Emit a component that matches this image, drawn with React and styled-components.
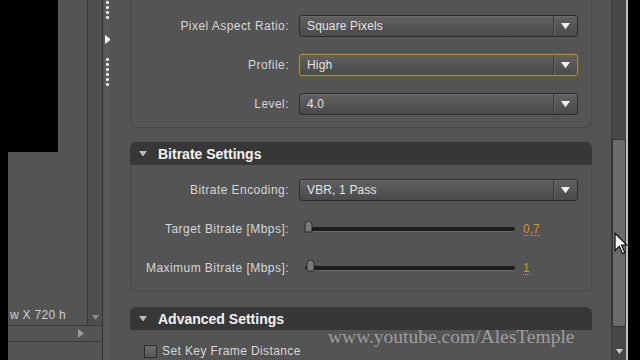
import React from 'react';
import styled, { createGlobalStyle } from 'styled-components';

const GlobalStyle = createGlobalStyle`
  html, body {
    margin: 0;
    padding: 0;
    background: #000;
    font-family: 'Liberation Sans', Arial, sans-serif;
  }
`;

const Screen = styled.div`
  position: relative;
  width: 640px;
  height: 360px;
  display: flex;
  background: #000;
  overflow: hidden;
`;

const LeftPane = styled.div`
  margin-left: 8px;
  width: 94px;
  display: flex;
  flex-direction: column;
  background: #545454;
`;

const Viewer = styled.div`
  flex: 1;
  display: flex;
  min-height: 0;
`;

const ViewerBody = styled.div`
  width: 79px;
  display: flex;
  flex-direction: column;
  border-right: 1px solid #3a3a3a;
`;

const Preview = styled.div`
  width: 50px;
  height: 152px;
  background: #000;
`;

const SizeText = styled.div`
  margin-top: auto;
  padding: 0 0 3px 2px;
  color: #cfcfcf;
  font-size: 12px;
  letter-spacing: 0.3px;
  white-space: nowrap;
`;

const VScroll = styled.div`
  width: 14px;
  display: flex;
  flex-direction: column;
  justify-content: flex-end;
  align-items: center;
  background: #4e4e4e;
  padding-bottom: 5px;
  box-sizing: border-box;
`;

const HScroll = styled.div`
  height: 17px;
  display: flex;
  align-items: center;
  border-top: 1px solid #3a3a3a;
  border-bottom: 1px solid #3a3a3a;
  box-sizing: border-box;
  padding-left: 70px;
`;

const BottomFill = styled.div`
  height: 18px;
`;

const Splitter = styled.div`
  width: 8px;
  display: flex;
  flex-direction: column;
  align-items: center;
  background: #585858;
  border-left: 1px solid #303030;
  box-sizing: border-box;
  padding: 1px 0 0 2px;
`;

const Dots = styled.div`
  display: flex;
  flex-direction: column;
  gap: 2px;
  margin-top: ${(p) => p.$top}px;
`;

const Dot = styled.span`
  width: 3px;
  height: 3px;
  background: #e8e8e8;
  border-radius: 1px;
`;

const MainPanel = styled.div`
  width: 502px;
  background: #545454;
  border-right: 1px solid #3c3c3c;
  box-sizing: border-box;
  padding: 0 19px 0 20px;
  display: flex;
  flex-direction: column;
`;

const Section = styled.div`
  border: 1px solid #4a4a4a;
  border-top: ${(p) => (p.$open ? 'none' : '1px solid #4a4a4a')};
  border-radius: 0 0 6px 6px;
  padding: ${(p) => p.$pad};
  display: flex;
  flex-direction: column;
  gap: 17px;
`;

const Row = styled.div`
  display: grid;
  grid-template-columns: 158px 279px;
  column-gap: 10px;
  align-items: center;
  height: 22px;
`;

const Label = styled.div`
  text-align: right;
  color: #d6d6d6;
  font-size: 12px;
  letter-spacing: 0.45px;
  white-space: nowrap;
`;

const Select = styled.div`
  height: 22px;
  box-sizing: border-box;
  display: flex;
  align-items: stretch;
  border-radius: 3px;
  border: 1px solid ${(p) => (p.$focus ? '#b88a30' : '#2c2c2c')};
  box-shadow: ${(p) => (p.$focus ? '0 0 0 1px #6e5a30' : 'inset 0 1px 0 #6a6a6a')};
  background: linear-gradient(#616161, #4a4a4a);
  color: #e4e4e4;
  font-size: 12px;
  letter-spacing: 0.15px;
`;

const SelectText = styled.div`
  flex: 1;
  display: flex;
  align-items: center;
  padding-left: 7px;
`;

const SelectArrow = styled.div`
  width: 23px;
  display: flex;
  align-items: center;
  justify-content: center;
  border-left: 1px solid #3c3c3c;
  box-shadow: inset 1px 0 0 #626262;
`;

const Header = styled.div`
  margin-top: ${(p) => p.$mt}px;
  height: 23px;
  display: flex;
  align-items: center;
  gap: 11px;
  padding-left: 9px;
  background: #373737;
  border-radius: 6px 6px 0 0;
  color: #f2f2f2;
  font-size: 14px;
  font-weight: bold;
`;

const SliderBox = styled.div`
  display: flex;
  align-items: center;
`;

const Track = styled.div`
  position: relative;
  margin-left: 6px;
  width: 210px;
  height: 4px;
  border-radius: 2px;
  background: #1c1c1c;
  box-shadow: 0 1px 0 #6a6a6a;
`;

const Knob = styled.svg`
  position: absolute;
  top: -7px;
  left: ${(p) => p.$x}px;
`;

const Value = styled.span`
  margin-left: 8px;
  color: #c9962e;
  font-size: 12px;
  border-bottom: 1px dotted #c9962e;
  line-height: 12px;
`;

const CheckRow = styled.div`
  margin-top: 14px;
  display: flex;
  align-items: center;
  gap: 5px;
  padding-left: 14px;
  color: #d8d8d8;
  font-size: 12px;
  letter-spacing: 0.4px;
`;

const Box = styled.span`
  width: 11px;
  height: 11px;
  border: 1px solid #2e2e2e;
  background: linear-gradient(#6c6c6c, #585858);
`;

const Scrollbar = styled.div`
  width: 14px;
  display: flex;
  flex-direction: column;
  background: #474747;
`;

const ScrollTrack = styled.div`
  height: 139px;
`;

const Thumb = styled.div`
  height: 188px;
  background: #6b6b6b;
  border: 1px solid #333;
  box-sizing: border-box;
`;

const ScrollEnd = styled.div`
  flex: 1;
  display: flex;
  align-items: flex-end;
  justify-content: center;
  padding-bottom: 6px;
`;

const EdgeLine = styled.div`
  width: 2px;
  background: #b9c2cc;
`;

const Watermark = styled.div`
  position: absolute;
  left: 328px;
  top: 326px;
  font-family: 'Liberation Serif', 'Times New Roman', serif;
  font-size: 19.5px;
  color: rgba(205, 205, 205, 0.62);
  white-space: nowrap;
`;

const Cursor = styled.svg`
  position: absolute;
  left: 614px;
  top: 232px;
`;

const Down = ({ color = '#f0f0f0', w = 9 }) => (
  <svg width={w} height={w * 0.7} viewBox="0 0 10 7">
    <path d="M0 0 L10 0 L5 7 Z" fill={color} />
  </svg>
);

const Right = ({ color = '#9a9a9a' }) => (
  <svg width="6" height="9" viewBox="0 0 6 9">
    <path d="M0 0 L6 4.5 L0 9 Z" fill={color} />
  </svg>
);

const Dropdown = ({ value, focus }) => (
  <Select $focus={focus}>
    <SelectText>{value}</SelectText>
    <SelectArrow>
      <Down />
    </SelectArrow>
  </Select>
);

const Slider = ({ x, value }) => (
  <SliderBox>
    <Track>
      <Knob $x={x} width="9" height="13" viewBox="0 0 9 13">
        <path d="M1 12 L1 5 Q1 1 4.5 1 Q8 1 8 5 L8 12 Z" fill="#7a7a7a" stroke="#2a2a2a" />
      </Knob>
    </Track>
    <Value>{value}</Value>
  </SliderBox>
);

const dotColumn = (n) => Array.from({ length: n }, (_, i) => <Dot key={i} />);

export default function App() {
  return (
    <Screen>
      <GlobalStyle />
      <LeftPane>
        <Viewer>
          <ViewerBody>
            <Preview />
            <SizeText>w X 720 h</SizeText>
          </ViewerBody>
          <VScroll>
            <Down color="#8c8c8c" w={7} />
          </VScroll>
        </Viewer>
        <HScroll>
          <Right />
        </HScroll>
        <BottomFill />
      </LeftPane>

      <Splitter>
        <Dots $top={0}>{dotColumn(4)}</Dots>
        <Dots $top={16}>
          <Right color="#f4f4f4" />
        </Dots>
        <Dots $top={14}>{dotColumn(6)}</Dots>
      </Splitter>

      <MainPanel>
        <Section $open $pad="15px 13px 12px 0">
          <Row>
            <Label>Pixel Aspect Ratio:</Label>
            <Dropdown value="Square Pixels" />
          </Row>
          <Row>
            <Label>Profile:</Label>
            <Dropdown value="High" focus />
          </Row>
          <Row>
            <Label>Level:</Label>
            <Dropdown value="4.0" />
          </Row>
        </Section>

        <Header $mt={14}>
          <Down color="#bdbdbd" w={8} />
          Bitrate Settings
        </Header>
        <Section $open $pad="14px 13px 12px 0">
          <Row>
            <Label>Bitrate Encoding:</Label>
            <Dropdown value="VBR, 1 Pass" />
          </Row>
          <Row>
            <Label>Target Bitrate [Mbps]:</Label>
            <Slider x={-1} value="0,7" />
          </Row>
          <Row>
            <Label>Maximum Bitrate [Mbps]:</Label>
            <Slider x={1} value="1" />
          </Row>
        </Section>

        <Header $mt={15}>
          <Down color="#bdbdbd" w={8} />
          Advanced Settings
        </Header>
        <CheckRow>
          <Box />
          Set Key Frame Distance
        </CheckRow>
      </MainPanel>

      <Scrollbar>
        <ScrollTrack />
        <Thumb />
        <ScrollEnd>
          <Down color="#d0d0d0" w={7} />
        </ScrollEnd>
      </Scrollbar>
      <EdgeLine />

      <Watermark>www.youtube.com/AlesTemple</Watermark>
      <Cursor width="15" height="24" viewBox="0 0 14 22">
        <path d="M1 1 L1 17 L5 13 L8 20 L10 19 L7 12 L12 12 Z" fill="#fff" stroke="#000" strokeWidth="1" />
      </Cursor>
    </Screen>
  );
}
